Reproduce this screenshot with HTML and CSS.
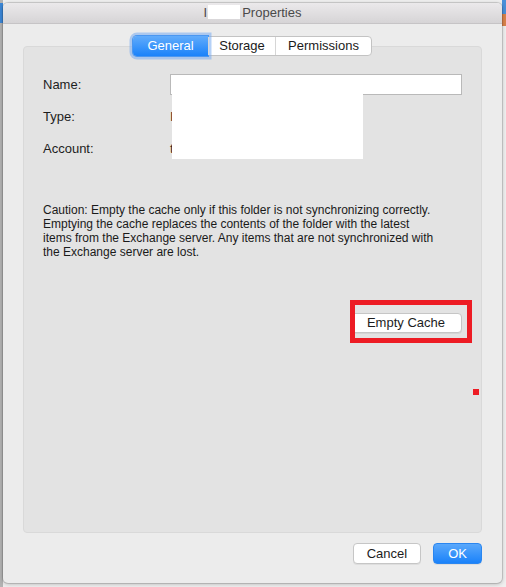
FILE: index.html
```html
<!DOCTYPE html>
<html lang="en">
<head>
<meta charset="utf-8">
<title>Properties</title>
<link rel="stylesheet" href="styles.css">
</head>
<body>
<div class="desktop">
  <div class="window">
    <div class="titlebar">
      <span class="title-char">I</span><span class="title-redact"></span><span class="title-text">Properties</span>
    </div>
    <div class="content">
      <div class="tabs">
        <div class="tab tab-general active">General</div>
        <div class="tab tab-storage">Storage</div>
        <div class="tab tab-permissions">Permissions</div>
      </div>
      <div class="panel">
        <div class="form">
          <div class="label">Name:</div>
          <div class="field"></div>
          <div class="label">Type:</div>
          <div class="value">I</div>
          <div class="label">Account:</div>
          <div class="value">t</div>
          <div class="redact"></div>
        </div>
        <p class="caution">Caution: Empty the cache only if this folder is not synchronizing correctly.<br>Emptying the cache replaces the contents of the folder with the latest<br>items from the Exchange server. Any items that are not synchronized with<br>the Exchange server are lost.</p>
        <div class="cache-row">
          <div class="highlight-wrap">
            <button class="btn btn-cache">Empty Cache</button>
            <div class="highlight"></div>
          </div>
        </div>
        <div class="marker"></div>
      </div>
      <div class="footer">
        <button class="btn btn-cancel">Cancel</button>
        <button class="btn btn-primary">OK</button>
      </div>
    </div>
  </div>
</div>
</body>
</html>
```

FILE: styles.css
```css
html, body {
  margin: 0;
  padding: 0;
}

body {
  width: 506px;
  height: 587px;
  overflow: hidden;
  font-family: "Liberation Sans", Arial, sans-serif;
  color: #1d1d1d;
  background:
    linear-gradient(#3b86d6, #3b86d6) no-repeat 0 3px / 3px 20px,
    linear-gradient(#4a8fd8, #4a8fd8) no-repeat 502px 0 / 4px 14px,
    linear-gradient(#d9824a, #d9824a) no-repeat 502px 14px / 4px 12px,
    linear-gradient(to right, #b3b3b3 0, #b3b3b3 3px, #efefef 3px);
}

.desktop {
  box-sizing: border-box;
  height: 587px;
  padding: 3px 4px 4px 3px;
}

.window {
  width: 499px;
  height: 580px;
  background: #ececec;
  border-radius: 5px;
  overflow: hidden;
  display: flex;
  flex-direction: column;
  box-shadow: 0 0 0 1px rgba(0, 0, 0, 0.12), 0 1px 4px rgba(0, 0, 0, 0.25);
}

.titlebar {
  height: 20px;
  flex: none;
  border-bottom: 1px solid #c6c4c6;
  background: linear-gradient(#ebe9eb, #d6d4d6);
  display: flex;
  justify-content: center;
  align-items: center;
  font-size: 13px;
  color: #4a4a4a;
}

.title-char {
  line-height: 20px;
}

.title-redact {
  display: inline-block;
  width: 32px;
  height: 14px;
  background: #ffffff;
  margin: 0 2px 2px 1px;
}

.title-text {
  line-height: 20px;
}

.content {
  flex: 1;
  display: flex;
  flex-direction: column;
  padding: 12px 20px 0 20px;
  min-height: 0;
}

.tabs {
  align-self: center;
  display: flex;
  box-sizing: border-box;
  height: 20px;
  margin-bottom: -10px;
  position: relative;
  z-index: 1;
  background: #ffffff;
  border: 1px solid #c3c3c3;
  border-radius: 4px;
  font-size: 13px;
}

.tab {
  box-sizing: border-box;
  line-height: 18px;
  text-align: center;
  color: #1a1a1a;
  border-left: 1px solid #d6d6d6;
}

.tab-general {
  width: 75px;
}

.tab-storage {
  width: 67px;
}

.tab-permissions {
  width: 96px;
}

.tab.active {
  border-left: none;
  margin: -1px 0 -1px -1px;
  line-height: 20px;
  color: #ffffff;
  background: linear-gradient(#62acfb, #1a82fa);
  border-radius: 4px 0 0 4px;
  box-shadow: 0 0 0 1px #4b97f0, 0 0 0 3.5px rgba(120, 172, 240, 0.55);
}

.panel {
  flex: 1;
  position: relative;
  background: #e3e3e3;
  border: 1px solid #d9d9d9;
  border-radius: 4px;
  padding: 27px 19px 0 19px;
  min-height: 0;
}

.form {
  position: relative;
  display: grid;
  grid-template-columns: 127px 1fr;
  grid-template-rows: 21px 20px 20px;
  row-gap: 12px;
  align-items: center;
  font-size: 13px;
}

.label {
  line-height: 20px;
}

.value {
  line-height: 20px;
  color: #3a2a1a;
}

.field {
  height: 21px;
  box-sizing: border-box;
  background: #ffffff;
  border: 1px solid #b9b9b9;
}

.redact {
  position: absolute;
  left: 129px;
  top: 19px;
  width: 191px;
  height: 66px;
  background: #ffffff;
}

.caution {
  margin: 44px 0 0 0;
  font-size: 12px;
  line-height: 14px;
  color: #1a1a1a;
}

.cache-row {
  display: flex;
  justify-content: flex-end;
  margin-top: 54px;
}

.highlight-wrap {
  position: relative;
}

.btn {
  display: block;
  box-sizing: border-box;
  height: 21px;
  margin: 0;
  font-family: "Liberation Sans", Arial, sans-serif;
  font-size: 13px;
  line-height: 19px;
  color: #1c1c1c;
  background: #ffffff;
  border: 1px solid #c6c6c6;
  border-radius: 4px;
  box-shadow: 0 1px 0 rgba(0, 0, 0, 0.06);
}

.btn-cache {
  height: 20px;
  line-height: 18px;
  padding: 0 16px;
}

.highlight {
  position: absolute;
  left: 0;
  top: -13px;
  right: -10px;
  bottom: -10px;
  border: 5px solid #ed1c24;
}

.marker {
  position: absolute;
  left: 449px;
  top: 342px;
  width: 6px;
  height: 6px;
  background: #ed1c24;
}

.footer {
  flex: none;
  display: flex;
  justify-content: flex-end;
  gap: 12px;
  padding: 10px 0 19px 0;
}

.btn-cancel {
  padding: 0 13px;
}

.btn-primary {
  padding: 0 14px;
  color: #ffffff;
  background: linear-gradient(#5aa8fb, #1a82fa);
  border-color: #2a86f0;
}
```
